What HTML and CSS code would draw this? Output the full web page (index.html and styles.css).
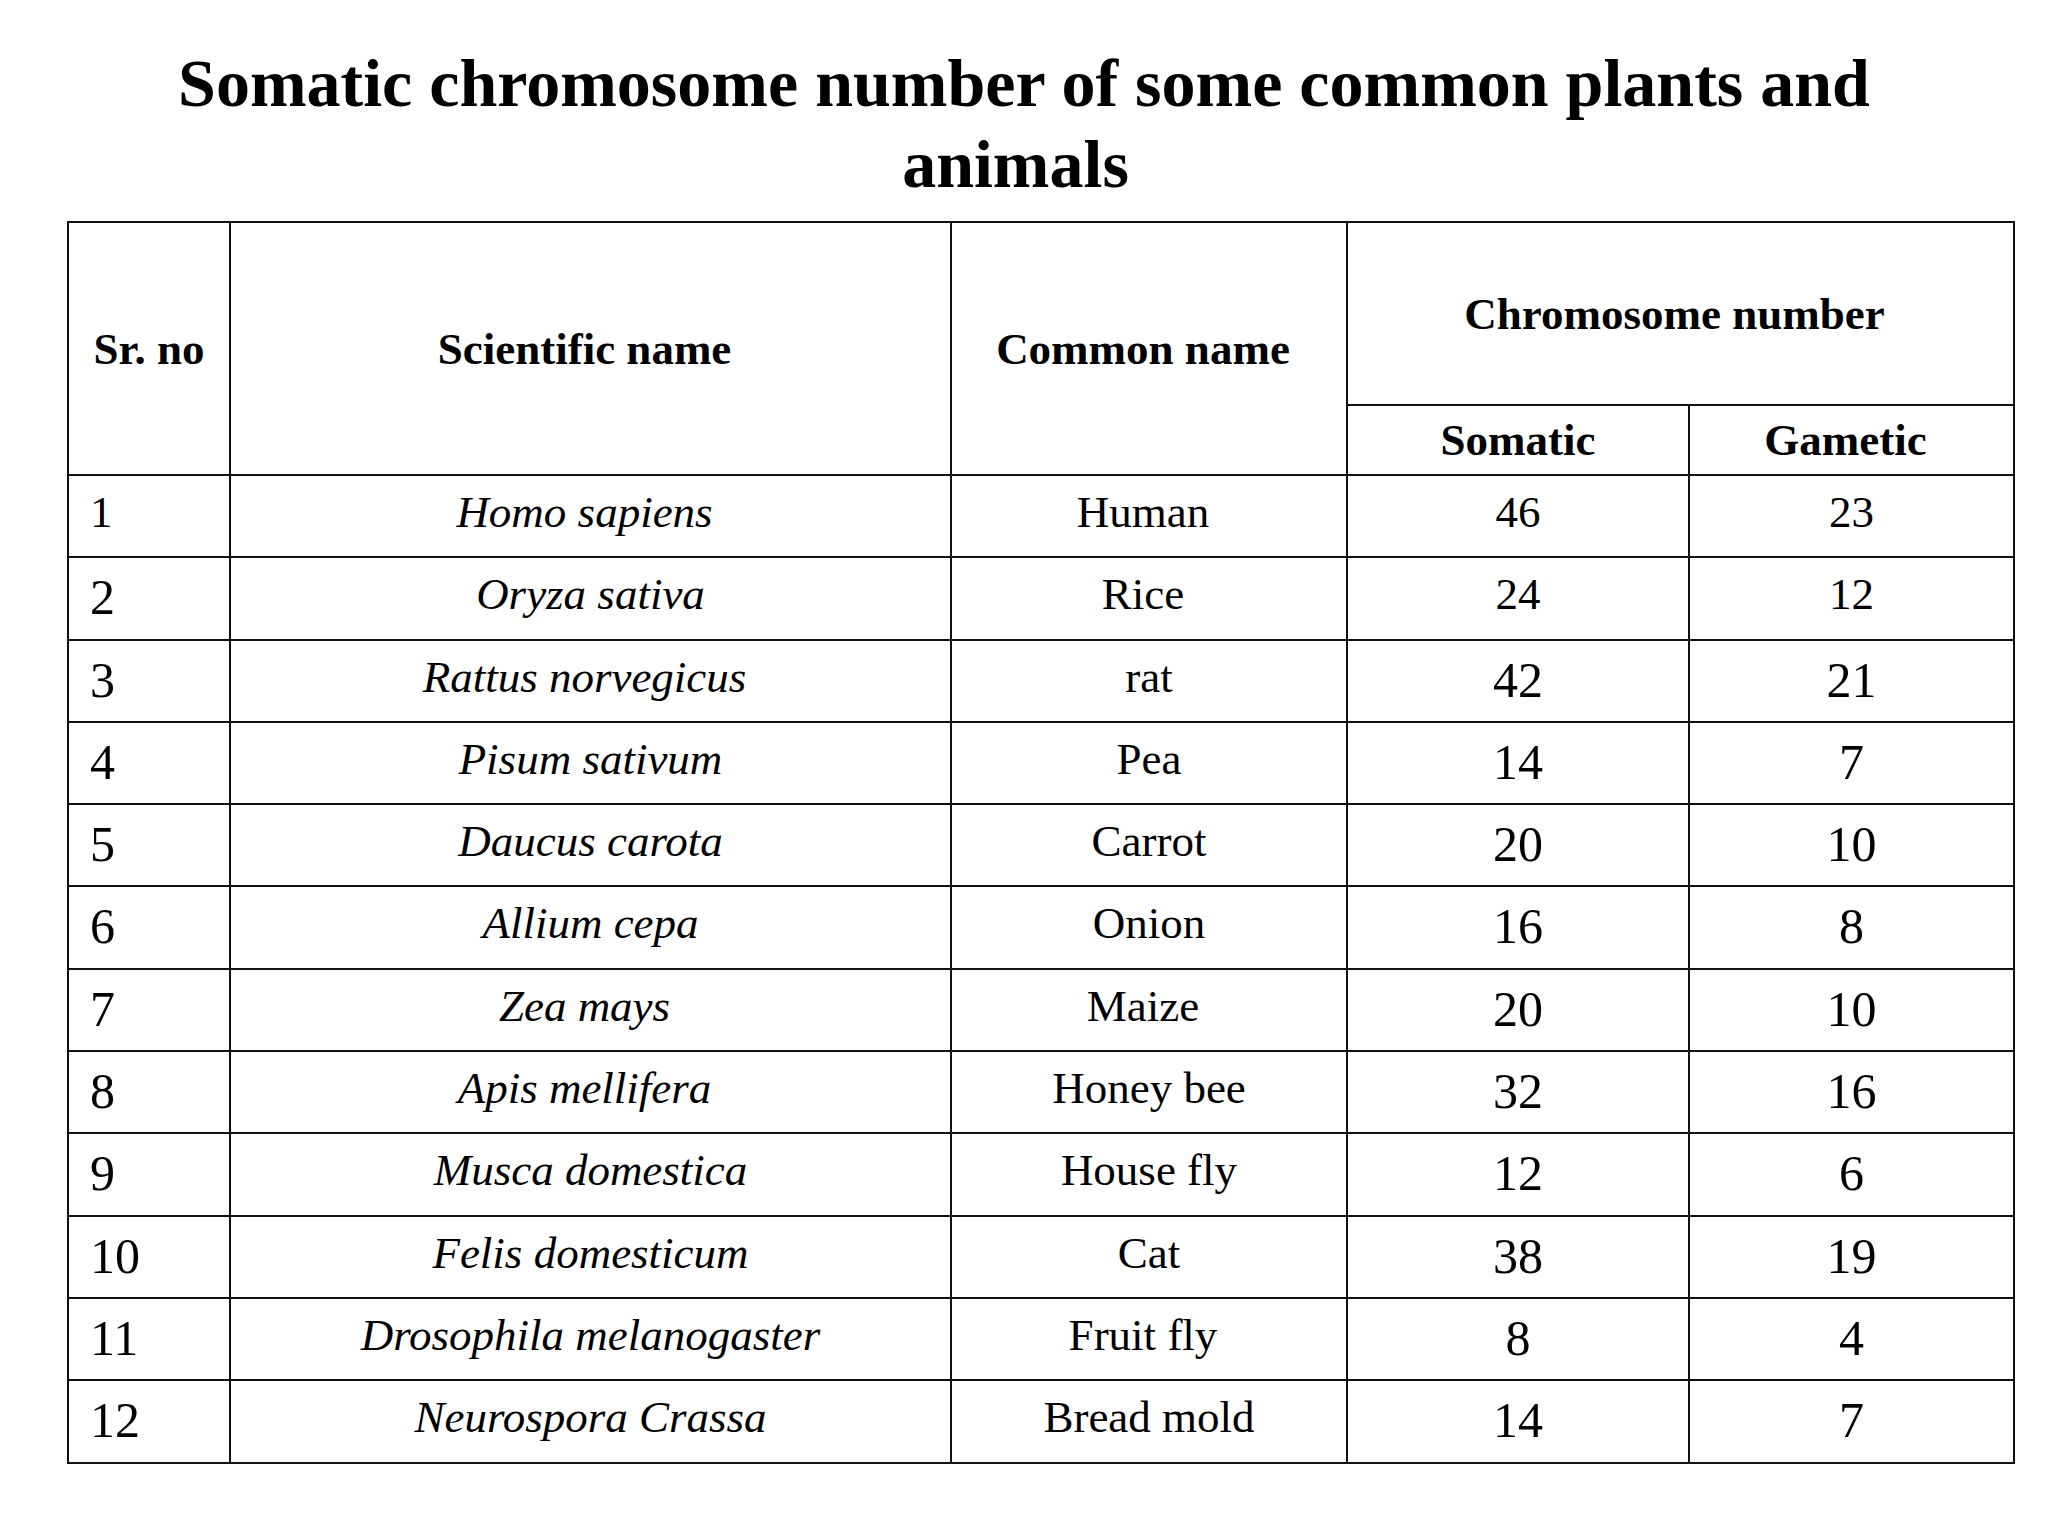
FILE: index.html
```html
<!DOCTYPE html>
<html lang="en">
<head>
<meta charset="utf-8">
<title>Somatic chromosome number of some common plants and animals</title>
<link rel="stylesheet" href="styles.css">
</head>
<body>
<div class="page">
  <h1 class="title">Somatic chromosome number of some common plants and animals&nbsp;</h1>
  <table class="chromo">
    <colgroup>
      <col class="c-sr">
      <col class="c-sci">
      <col class="c-com">
      <col class="c-som">
      <col class="c-gam">
    </colgroup>
    <thead>
      <tr class="h1row">
        <th rowspan="2">Sr. no</th>
        <th rowspan="2" class="shift">Scientific name</th>
        <th rowspan="2" class="shift">Common name</th>
        <th colspan="2" class="shift">Chromosome number</th>
      </tr>
      <tr class="h2row">
        <th>Somatic</th>
        <th class="shift">Gametic</th>
      </tr>
    </thead>
    <tbody>
      <tr><td class="sr">1</td><td class="sci shift">Homo sapiens</td><td class="com shift">Human</td><td class="num">46</td><td class="num">23</td></tr>
      <tr><td class="sr big">2</td><td class="sci">Oryza sativa</td><td class="com shift">Rice</td><td class="num">24</td><td class="num">12</td></tr>
      <tr><td class="sr big">3</td><td class="sci shift">Rattus norvegicus</td><td class="com">rat</td><td class="num big">42</td><td class="num big">21</td></tr>
      <tr><td class="sr big">4</td><td class="sci">Pisum sativum</td><td class="com">Pea</td><td class="num big">14</td><td class="num big">7</td></tr>
      <tr><td class="sr big">5</td><td class="sci">Daucus carota</td><td class="com">Carrot</td><td class="num big">20</td><td class="num big">10</td></tr>
      <tr><td class="sr big">6</td><td class="sci">Allium cepa</td><td class="com">Onion</td><td class="num big">16</td><td class="num big">8</td></tr>
      <tr><td class="sr big">7</td><td class="sci shift">Zea mays</td><td class="com shift">Maize</td><td class="num big">20</td><td class="num big">10</td></tr>
      <tr><td class="sr big">8</td><td class="sci shift">Apis mellifera</td><td class="com">Honey bee</td><td class="num big">32</td><td class="num big">16</td></tr>
      <tr><td class="sr big">9</td><td class="sci">Musca domestica</td><td class="com">House fly</td><td class="num big">12</td><td class="num big">6</td></tr>
      <tr><td class="sr big">10</td><td class="sci">Felis domesticum</td><td class="com">Cat</td><td class="num big">38</td><td class="num big">19</td></tr>
      <tr><td class="sr big">11</td><td class="sci">Drosophila melanogaster</td><td class="com shift">Fruit fly</td><td class="num big">8</td><td class="num big">4</td></tr>
      <tr><td class="sr big">12</td><td class="sci">Neurospora Crassa</td><td class="com">Bread mold</td><td class="num big">14</td><td class="num big">7</td></tr>
    </tbody>
  </table>
</div>
</body>
</html>
```

FILE: styles.css
```css
html, body {
  margin: 0;
  padding: 0;
  background: #ffffff;
}

body {
  width: 2048px;
  font-family: "Liberation Serif", "Times New Roman", Times, serif;
  color: #000000;
}

.page {
  display: flex;
  flex-direction: column;
  align-items: flex-start;
}

.title {
  align-self: center;
  width: 1800px;
  margin: 43px 0 0 0;
  font-size: 68px;
  line-height: 81px;
  font-weight: bold;
  text-align: center;
}

.chromo {
  margin: 16px 0 0 67px;
  width: 1948px;
  table-layout: fixed;
  border-collapse: collapse;
  border: 2px solid #111111;
}

.c-sr  { width: 162px; }
.c-sci { width: 721px; }
.c-com { width: 396px; }
.c-som { width: 342px; }
.c-gam { width: 325px; }

.chromo th,
.chromo td {
  border: 2px solid #111111;
  padding: 0;
}

.chromo th {
  font-size: 45px;
  font-weight: bold;
  text-align: center;
  vertical-align: middle;
  line-height: 52px;
}

.chromo th.shift {
  padding-right: 12px;
}

.h1row { height: 183px; }
.h2row { height: 70px; }

.chromo tbody tr { height: 82.3px; }

.chromo td {
  font-size: 45px;
  line-height: 50px;
  vertical-align: top;
  padding-top: 11px;
  white-space: nowrap;
}

.chromo td.big {
  font-size: 50px;
  line-height: 50px;
  padding-top: 14px;
}

.chromo td.sr {
  text-align: left;
  padding-left: 21px;
}

.chromo td.sci {
  font-style: italic;
  text-align: center;
}

.chromo td.com {
  text-align: center;
}

.chromo td.shift {
  padding-right: 12px;
}

.chromo td.num {
  text-align: center;
}
```
